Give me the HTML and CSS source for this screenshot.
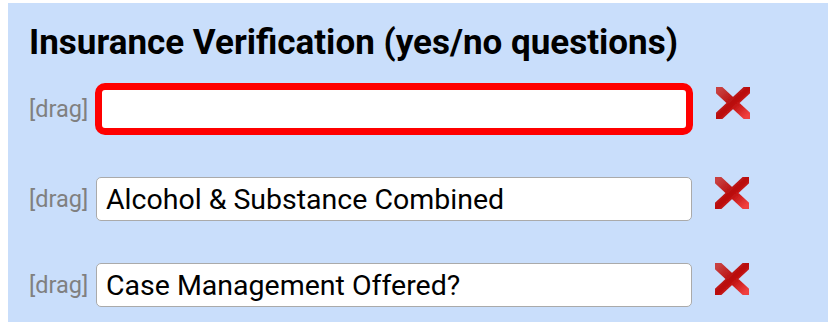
FILE: index.html
```html
<!DOCTYPE html>
<html>
<head>
    <meta charset="UTF-8">
    <title>Insurance Verification</title>
    <link rel="stylesheet" href="styles.css">
</head>
<body>
    <div class="panel">
        <h2>Insurance Verification (yes/no questions)</h2>

        <div class="rows">
            <div class="row">
                <span class="drag">[drag]</span>
                <input type="text" class="field invalid" value="">
                <span class="delete">
                    <svg width="40" height="38" viewBox="0 0 40 38">
                        <defs>
                            <linearGradient id="xg" x1="0" y1="0" x2="1" y2="1">
                                <stop offset="0" stop-color="#c84040"/>
                                <stop offset="0.5" stop-color="#b80a0a"/>
                                <stop offset="1" stop-color="#f04040"/>
                            </linearGradient>
                            <filter id="soft"><feGaussianBlur stdDeviation="0.7"/></filter>
                        </defs>
                        <path d="M6 6 L34 32 M34 6 L6 32" stroke="url(#xg)" stroke-width="9" stroke-linecap="square" filter="url(#soft)"/>
                    </svg>
                </span>
            </div>

            <div class="row">
                <span class="drag">[drag]</span>
                <input type="text" class="field" value="Alcohol &amp; Substance Combined">
                <span class="delete">
                    <svg width="40" height="38" viewBox="0 0 40 38">
                        <path d="M6 6 L34 32 M34 6 L6 32" stroke="url(#xg)" stroke-width="9" stroke-linecap="square" filter="url(#soft)"/>
                    </svg>
                </span>
            </div>

            <div class="row">
                <span class="drag">[drag]</span>
                <input type="text" class="field" value="Case Management Offered?">
                <span class="delete">
                    <svg width="40" height="38" viewBox="0 0 40 38">
                        <path d="M6 6 L34 32 M34 6 L6 32" stroke="url(#xg)" stroke-width="9" stroke-linecap="square" filter="url(#soft)"/>
                    </svg>
                </span>
            </div>
        </div>
    </div>
</body>
</html>
```

FILE: styles.css
```css
body {
    margin: 3px 6px 0 8px;
    font-family: Roboto, "Liberation Sans", sans-serif;
    background: white;
}
.panel {
    background-color: #c9defb;
    padding: 19px 0 15px 21px;
}
h2 {
    margin: 0 0 20px;
    font-size: 35px;
    font-weight: 700;
    color: #000;
}
.rows {
    display: flex;
    flex-direction: column;
    gap: 42px;
}
.row {
    display: flex;
    align-items: center;
}
.drag {
    font-size: 23.5px;
    color: #808080;
    width: 67px;
}
.field {
    width: 596px;
    height: 44px;
    padding: 0 9px;
    border: 1px solid #aaa;
    border-radius: 5px;
    font-family: Roboto, "Liberation Sans", sans-serif;
    font-size: 28.5px;
    color: #000;
    background: white;
    box-sizing: border-box;
    outline: none;
}
.field.invalid {
    width: 598px;
    height: 52px;
    border: 7px solid #ff0000;
    border-radius: 10px;
    margin-left: -1px;
}
.delete {
    margin: -6px 0 6px 20px;
    display: flex;
}
```
